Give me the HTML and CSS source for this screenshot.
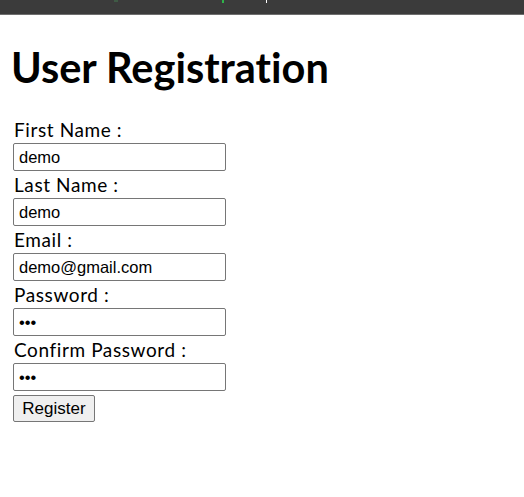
FILE: index.html
```html
<!DOCTYPE html>
<html lang="en">
<head>
<meta charset="utf-8">
<title>User Registration</title>
<link rel="stylesheet" href="styles.css">
</head>
<body>
<div class="topbar"><span class="dot dot-a"></span><span class="dot dot-b"></span><span class="dot dot-c"></span></div>
<main class="page">
  <h1 class="title">User Registration</h1>
  <form class="form">
    <label class="label" for="fn">First Name :</label>
    <input class="field" id="fn" type="text" value="demo">
    <label class="label" for="ln">Last Name :</label>
    <input class="field" id="ln" type="text" value="demo">
    <label class="label" for="em">Email :</label>
    <input class="field" id="em" type="text" value="demo@gmail.com">
    <label class="label" for="pw">Password :</label>
    <input class="field" id="pw" type="password" value="abc">
    <label class="label" for="cpw">Confirm Password :</label>
    <input class="field" id="cpw" type="password" value="abc">
    <button class="btn" type="button">Register</button>
  </form>
</main>
</body>
</html>
```
FILE: styles.css
```css
html, body { margin: 0; padding: 0; background: #fff; }
body { font-family: "Lato", "Open Sans", sans-serif; color: #000; font-variant-ligatures: none; }
.topbar { height: 14px; background: #3b3b3b; border-bottom: 1px solid #6e6e6e; display: flex; }
.dot { width: 2px; height: 2px; }
.dot-a { margin-left: 114px; width: 4px; background: #3f5a45; }
.dot-b { margin-left: 104px; width: 2px; height: 3px; background: #2fb34a; }
.dot-c { margin-left: 42px; width: 1px; height: 3px; background: #ffffff; }
.page { padding: 0 0 0 11px; }
.title { margin: 26px 0 0; font-size: 41.5px; font-weight: 700; line-height: 52px; }
.form { display: flex; flex-direction: column; align-items: flex-start; margin-top: 23px; padding-left: 2px; }
.label { font-size: 19px; letter-spacing: 0.6px; line-height: 27px; height: 27px; padding-left: 1px; }
.field { box-sizing: border-box; width: 213px; height: 28px; margin: 0; border: 1px solid #767676; border-radius: 2px; padding: 0 5px; font-family: "Liberation Sans", Arial, sans-serif; font-size: 16.5px; color: #000; }
.btn { margin-top: 4px; box-sizing: border-box; width: 82px; height: 27px; padding: 0; border: 1px solid #767676; border-radius: 2px; background: #efefef; font-family: "Liberation Sans", Arial, sans-serif; font-size: 17px; color: #000; }
```
